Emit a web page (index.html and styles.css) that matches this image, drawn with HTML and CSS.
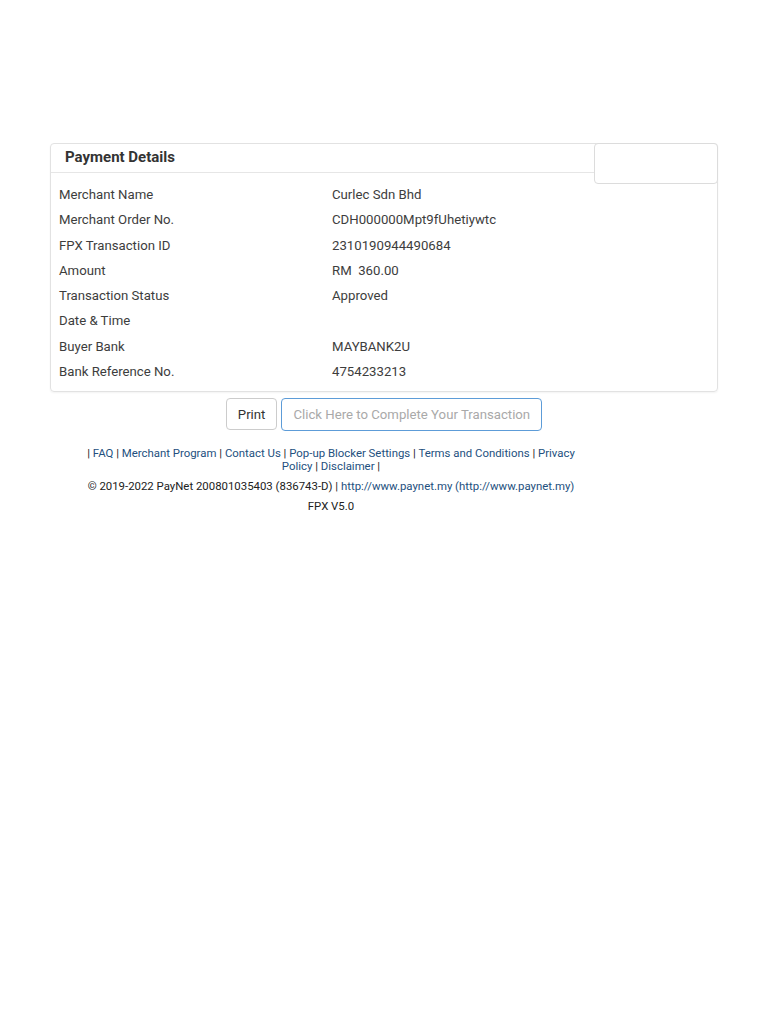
FILE: index.html
```html
<!DOCTYPE html>
<html lang="en">
<head>
    <meta charset="UTF-8">
    <meta name="viewport" content="width=device-width, initial-scale=1.0">
    <title>FPX - Payment Details</title>
    <link rel="stylesheet" href="styles.css">
</head>
<body>
    <div class="page">
        <div class="card">
            <div class="card-header">Payment Details</div>
            <div class="corner-box"></div>
            <div class="card-body">
                <div class="row"><span class="label">Merchant Name</span><span class="value">Curlec Sdn Bhd</span></div>
                <div class="row"><span class="label">Merchant Order No.</span><span class="value">CDH000000Mpt9fUhetiywtc</span></div>
                <div class="row"><span class="label">FPX Transaction ID</span><span class="value">2310190944490684</span></div>
                <div class="row"><span class="label">Amount</span><span class="value">RM&nbsp; 360.00</span></div>
                <div class="row"><span class="label">Transaction Status</span><span class="value">Approved</span></div>
                <div class="row"><span class="label">Date &amp; Time</span><span class="value"></span></div>
                <div class="row"><span class="label">Buyer Bank</span><span class="value">MAYBANK2U</span></div>
                <div class="row"><span class="label">Bank Reference No.</span><span class="value">4754233213</span></div>
            </div>
        </div>

        <div class="actions">
            <button class="btn">Print</button>
            <button class="btn btn-complete">Click Here to Complete Your Transaction</button>
        </div>

        <div class="footer">
            <p class="links">| <a href="#">FAQ</a> | <a href="#">Merchant Program</a> | <a href="#">Contact Us</a> | <a href="#">Pop-up Blocker Settings</a> | <a href="#">Terms and Conditions</a> | <a href="#">Privacy Policy</a> | <a href="#">Disclaimer</a> |</p>
            <p class="copyright">© 2019-2022 PayNet 200801035403 (836743-D) | <a href="#">http://www.paynet.my (http://www.paynet.my)</a></p>
            <p class="version">FPX V5.0</p>
        </div>
    </div>
</body>
</html>
```

FILE: styles.css
```css
body {
    font-family: Roboto, 'Liberation Sans', sans-serif;
    margin: 0;
    padding: 0;
    background: #fff;
    color: #333;
}

.page {
    padding-top: 143px;
}

.card {
    position: relative;
    margin: 0 50px;
    border: 1px solid #e2e2e2;
    border-radius: 4px;
    box-shadow: 0 1px 2px rgba(0, 0, 0, 0.05);
}

.card-header {
    height: 28px;
    line-height: 27px;
    padding-left: 14px;
    font-size: 15px;
    font-weight: 700;
    color: #333;
    border-bottom: 1px solid #e6e6e6;
}

.corner-box {
    position: absolute;
    top: -1px;
    right: -1px;
    width: 122px;
    height: 39px;
    border: 1px solid #dcdcdc;
    border-radius: 4px;
    background: #fff;
}

.card-body {
    padding: 9px 8px 7px;
}

.row {
    display: flex;
    height: 25.3px;
    line-height: 25.3px;
    font-size: 13.2px;
    color: #3d3d3d;
}

.label {
    width: 273px;
}

.actions {
    display: flex;
    justify-content: center;
    gap: 4px;
    margin-top: 6px;
}

.btn {
    font-family: Roboto, 'Liberation Sans', sans-serif;
    font-size: 13.2px;
    color: #333;
    background: #fff;
    border: 1px solid #ccc;
    border-radius: 4px;
    height: 32px;
    padding: 0 11px;
}

.btn-complete {
    height: 33px;
    color: #a9a9a9;
    border-color: #5d9cd8;
    padding: 0 11px;
}

.footer {
    width: 500px;
    margin-left: 81px;
    text-align: center;
    font-size: 11.4px;
    color: #222;
}

.footer p {
    margin: 0;
}

.footer a {
    color: #23507e;
    text-decoration: none;
}

.links {
    margin-top: 16px !important;
    line-height: 13px;
}

.copyright {
    margin-top: 6px !important;
    line-height: 14px;
}

.version {
    margin-top: 6px !important;
    line-height: 14px;
}
```
